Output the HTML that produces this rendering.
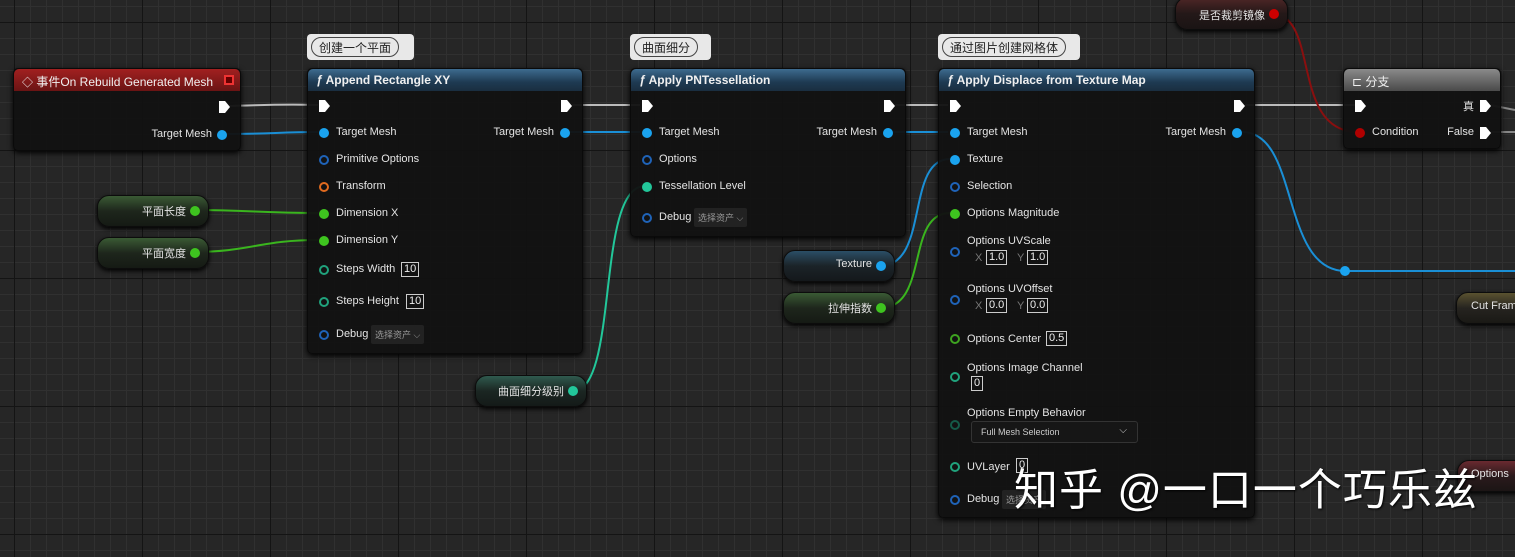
<!DOCTYPE html>
<html><head><meta charset="utf-8">
<style>
*{margin:0;padding:0;box-sizing:border-box}
body{width:1515px;height:557px;overflow:hidden;position:relative;font-family:"Liberation Sans","Noto Sans CJK SC",sans-serif;font-size:11px;color:#e0e0e0;
background-color:#262626;
background-image:
linear-gradient(#141414 1px,transparent 1px),
linear-gradient(90deg,#141414 1px,transparent 1px),
linear-gradient(#303030 1px,transparent 1px),
linear-gradient(90deg,#303030 1px,transparent 1px);
background-size:128px 128px,128px 128px,16px 16px,16px 16px;
background-position:0 22px,14px 0,0 6px,14px 0;}
.a{position:absolute}
.node{position:absolute;background:rgba(18,18,18,.96);border-radius:5px;box-shadow:0 2px 6px #000;border:1px solid #0a0a0a}
.hd{position:absolute;left:0;right:0;top:0;height:22px;border-radius:5px 5px 0 0;font-weight:bold;font-size:12px;color:#f0f0f0;padding:4px 0 0 8px;white-space:nowrap;overflow:hidden}
.fn{background:linear-gradient(180deg,#3d6b8f,#1e3a52 60%,#1a2e40)}
.t{position:absolute;white-space:nowrap;font-size:11px;color:#e4e4e4}
.p{position:absolute;width:10px;height:10px;border-radius:50%}
.f{background:#1aa3ef}
.h{border:2px solid #1f63b8}
.g{background:#3ec41f}
.tl{background:#22c79a}
.ho{border:2px solid #e06a1f}
.ht{border:2px solid #20a27c}
.hg{border:2px solid #3ea320}
.red{background:#b00000}
.ex{position:absolute;width:11px;height:12px;background:#fff;clip-path:polygon(0 0,55% 0,100% 50%,55% 100%,0 100%)}
.box{position:absolute;border:1px solid #ccc;font-size:11px;padding:0 2px;height:15px;line-height:13px;color:#eee}
.bub{position:absolute;height:26px;background:#e8e8e8;border-radius:4px;}
.bub span{position:absolute;left:4px;top:3px;height:20px;border:1px solid #444;border-radius:10px;color:#222;font-size:12px;padding:1px 7px;white-space:nowrap}
.pill{position:absolute;height:32px;border-radius:12px;border:1px solid #0c0c0c;box-shadow:0 2px 5px #000;font-size:11px;color:#eee}
.pill .t{right:22px;top:7px}
.pill .p{right:8px;top:10px}
.dd{position:absolute;background:#222;color:#999;font-size:9px;padding:3px 4px;border-radius:2px}
</style></head><body>

<svg class="a" style="left:0;top:0" width="1515" height="557">
<g fill="none" stroke-width="2">
<path d="M228 106 C270 105 280 104 318 105" stroke="#bbb"/>
<path d="M572 105 L640 105" stroke="#bbb"/>
<path d="M894 105 L948 105" stroke="#bbb"/>
<path d="M1245 105 L1355 105" stroke="#bbb"/>
<path d="M1490 105 L1515 110" stroke="#888"/>
<path d="M1490 132 L1515 132" stroke="#888"/>
<path d="M226 134 C270 134 280 132 318 132" stroke="#1a8fd6"/>
<path d="M570 132 L640 132" stroke="#1a8fd6"/>
<path d="M892 132 L948 132" stroke="#1a8fd6"/>
<path d="M1242 132 C1300 132 1280 270 1345 271 L1515 271" stroke="#1a8fd6"/>
<path d="M193 210 C250 210 260 213 318 213" stroke="#3ab51e"/>
<path d="M193 252 C250 252 260 240 318 240" stroke="#3ab51e"/>
<path d="M572 392 C620 392 595 186 645 186" stroke="#22c79a"/>
<path d="M880 266 C930 266 905 159 950 159" stroke="#1a8fd6"/>
<path d="M880 308 C930 308 905 213 950 213" stroke="#3ab51e"/>
<path d="M1272 14 C1320 14 1290 132 1358 132" stroke="#8a0f0f"/>
</g>
<circle cx="1345" cy="271" r="5" fill="#1aa3ef"/>
</svg>

<div class="node" style="left:13px;top:68px;width:228px;height:83px">
<div class="hd" style="background:linear-gradient(180deg,#a12020,#6a1414);font-weight:normal"><span style="font-size:11px">◇</span> 事件On Rebuild Generated Mesh</div>
<div class="a" style="left:210px;top:6px;width:10px;height:10px;border:2px solid #e33;background:#600"></div>
<div class="ex" style="left:205px;top:32px"></div>
<div class="t" style="right:28px;top:59px">Target Mesh</div>
<div class="p f" style="left:203px;top:61px"></div>
</div>

<div class="bub" style="left:307px;top:34px;width:107px"><span>创建一个平面</span></div>
<div class="bub" style="left:630px;top:34px;width:81px"><span>曲面细分</span></div>
<div class="bub" style="left:938px;top:34px;width:142px"><span>通过图片创建网格体</span></div>

<div class="node" style="left:307px;top:68px;width:276px;height:286px">
<div class="hd fn"><i>ƒ</i> Append Rectangle XY</div>
<div class="ex" style="left:11px;top:31px"></div><div class="ex" style="left:253px;top:31px"></div>
<div class="p f" style="left:11px;top:59px"></div><div class="t" style="left:28px;top:57px">Target Mesh</div>
<div class="t" style="right:28px;top:57px">Target Mesh</div><div class="p f" style="left:252px;top:59px"></div>
<div class="p h" style="left:11px;top:86px"></div><div class="t" style="left:28px;top:84px">Primitive Options</div>
<div class="p ho" style="left:11px;top:113px"></div><div class="t" style="left:28px;top:111px">Transform</div>
<div class="p g" style="left:11px;top:140px"></div><div class="t" style="left:28px;top:138px">Dimension X</div>
<div class="p g" style="left:11px;top:167px"></div><div class="t" style="left:28px;top:165px">Dimension Y</div>
<div class="p ht" style="left:11px;top:196px"></div><div class="t" style="left:28px;top:194px">Steps Width</div><div class="box" style="left:93px;top:193px">10</div>
<div class="p ht" style="left:11px;top:228px"></div><div class="t" style="left:28px;top:226px">Steps Height</div><div class="box" style="left:98px;top:225px">10</div>
<div class="p h" style="left:11px;top:261px"></div><div class="t" style="left:28px;top:259px">Debug</div><div class="dd" style="left:63px;top:256px">选择资产 ⌵</div>
</div>

<div class="node" style="left:630px;top:68px;width:276px;height:169px">
<div class="hd fn"><i>ƒ</i> Apply PNTessellation</div>
<div class="ex" style="left:11px;top:31px"></div><div class="ex" style="left:253px;top:31px"></div>
<div class="p f" style="left:11px;top:59px"></div><div class="t" style="left:28px;top:57px">Target Mesh</div>
<div class="t" style="right:28px;top:57px">Target Mesh</div><div class="p f" style="left:252px;top:59px"></div>
<div class="p h" style="left:11px;top:86px"></div><div class="t" style="left:28px;top:84px">Options</div>
<div class="p tl" style="left:11px;top:113px"></div><div class="t" style="left:28px;top:111px">Tessellation Level</div>
<div class="p h" style="left:11px;top:144px"></div><div class="t" style="left:28px;top:142px">Debug</div><div class="dd" style="left:63px;top:139px">选择资产 ⌵</div>
</div>

<div class="node" style="left:938px;top:68px;width:317px;height:450px">
<div class="hd fn"><i>ƒ</i> Apply Displace from Texture Map</div>
<div class="ex" style="left:11px;top:31px"></div><div class="ex" style="left:295px;top:31px"></div>
<div class="p f" style="left:11px;top:59px"></div><div class="t" style="left:28px;top:57px">Target Mesh</div>
<div class="t" style="right:28px;top:57px">Target Mesh</div><div class="p f" style="left:293px;top:59px"></div>
<div class="p f" style="left:11px;top:86px"></div><div class="t" style="left:28px;top:84px">Texture</div>
<div class="p h" style="left:11px;top:113px"></div><div class="t" style="left:28px;top:111px">Selection</div>
<div class="p g" style="left:11px;top:140px"></div><div class="t" style="left:28px;top:138px">Options Magnitude</div>
<div class="p h" style="left:11px;top:178px"></div><div class="t" style="left:28px;top:166px">Options UVScale</div>
<div class="t" style="left:36px;top:183px;color:#777">X</div><div class="box" style="left:47px;top:181px">1.0</div><div class="t" style="left:78px;top:183px;color:#777">Y</div><div class="box" style="left:88px;top:181px">1.0</div>
<div class="p h" style="left:11px;top:226px"></div><div class="t" style="left:28px;top:214px">Options UVOffset</div>
<div class="t" style="left:36px;top:231px;color:#777">X</div><div class="box" style="left:47px;top:229px">0.0</div><div class="t" style="left:78px;top:231px;color:#777">Y</div><div class="box" style="left:88px;top:229px">0.0</div>
<div class="p hg" style="left:11px;top:265px"></div><div class="t" style="left:28px;top:264px">Options Center</div><div class="box" style="left:107px;top:262px">0.5</div>
<div class="p ht" style="left:11px;top:303px"></div><div class="t" style="left:28px;top:293px">Options Image Channel</div><div class="box" style="left:32px;top:307px">0</div>
<div class="p" style="left:11px;top:351px;border:2px solid #155a48"></div><div class="t" style="left:28px;top:338px">Options Empty Behavior</div>
<div class="a" style="left:32px;top:352px;width:167px;height:22px;border:1px solid #333;background:#161616;border-radius:3px;font-size:9px;color:#ccc;padding:5px 9px">Full Mesh Selection<span style="position:absolute;right:10px;top:3px;font-size:10px">⌵</span></div>
<div class="p ht" style="left:11px;top:393px"></div><div class="t" style="left:28px;top:392px">UVLayer</div><div class="box" style="left:77px;top:389px">0</div>
<div class="p h" style="left:11px;top:426px"></div><div class="t" style="left:28px;top:424px">Debug</div><div class="dd" style="left:63px;top:421px">选择资产</div>
</div>

<div class="node" style="left:1343px;top:68px;width:158px;height:81px">
<div class="hd" style="background:linear-gradient(180deg,#8a8a8a,#4a4a4a);font-weight:normal">⊏ 分支</div>
<div class="ex" style="left:11px;top:31px"></div>
<div class="p red" style="left:11px;top:59px"></div><div class="t" style="left:28px;top:57px">Condition</div>
<div class="t" style="right:26px;top:29px">真</div><div class="ex" style="left:136px;top:31px"></div>
<div class="t" style="right:26px;top:57px">False</div><div class="ex" style="left:136px;top:58px"></div>
</div>

<div class="pill" style="left:97px;top:195px;width:112px;background:linear-gradient(180deg,#3a5a34,#1e261c 50%,#151a14)"><div class="t">平面长度</div><div class="p g"></div></div>
<div class="pill" style="left:97px;top:237px;width:112px;background:linear-gradient(180deg,#3a5a34,#1e261c 50%,#151a14)"><div class="t">平面宽度</div><div class="p g"></div></div>
<div class="pill" style="left:475px;top:375px;width:112px;background:linear-gradient(180deg,#2f5a4e,#1b2622 50%,#141a18)"><div class="t">曲面细分级别</div><div class="p tl"></div></div>
<div class="pill" style="left:783px;top:250px;width:112px;background:linear-gradient(180deg,#2b4e66,#1b2328 50%,#14181b)"><div class="t">Texture</div><div class="p f"></div></div>
<div class="pill" style="left:783px;top:292px;width:112px;background:linear-gradient(180deg,#3a5a34,#1e261c 50%,#151a14)"><div class="t">拉伸指数</div><div class="p g"></div></div>
<div class="pill" style="left:1175px;top:-3px;width:113px;height:33px;background:linear-gradient(180deg,#4e2626,#241818 50%,#1a1414)"><div class="t" style="top:9px">是否裁剪镜像</div><div class="p red" style="top:11px;background:#c00"></div></div>
<div class="pill" style="left:1456px;top:292px;width:80px;background:linear-gradient(180deg,#5a5230,#262420 50%,#1a1915)"><div class="t" style="left:14px;right:auto">Cut Fram</div></div>
<div class="pill" style="left:1457px;top:460px;width:80px;background:linear-gradient(180deg,#6a2a30,#2a1a1c 50%,#1c1515)"><div class="t" style="left:13px;right:auto">Options</div></div>

<div class="a" style="left:1014px;top:465px;font-size:44px;letter-spacing:1px;color:#fff;white-space:nowrap;text-shadow:1px 1px 2px #000;line-height:52px">知乎 @一口一个巧乐兹</div>
</body></html>
